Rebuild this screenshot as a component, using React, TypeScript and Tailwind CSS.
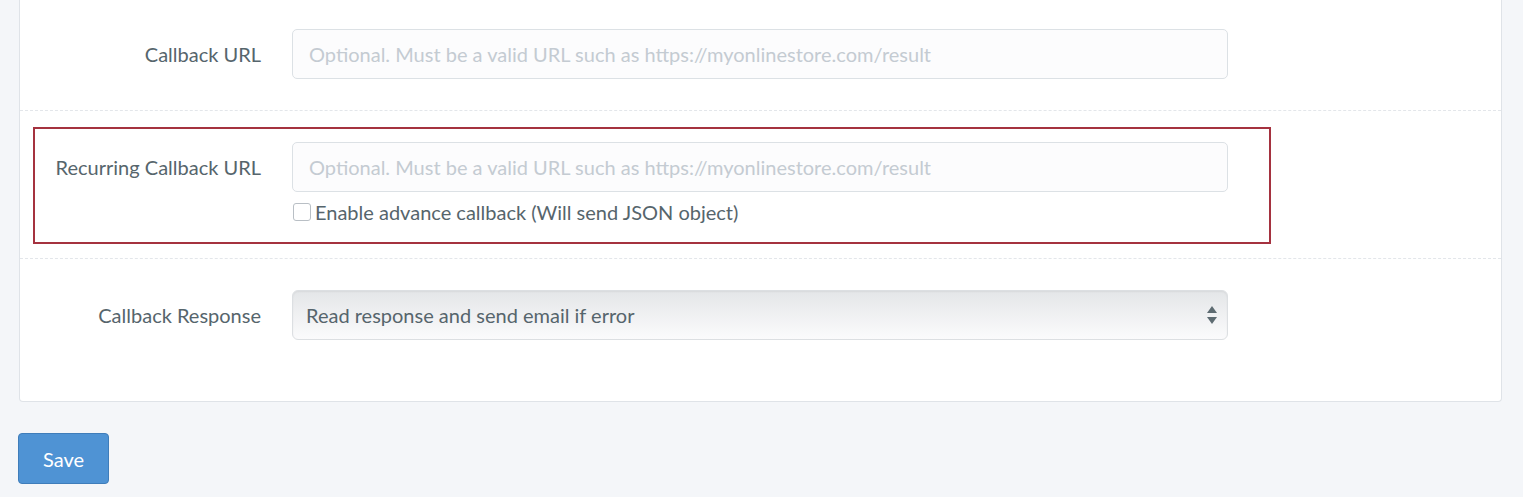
import React from "react";

const font = { fontFamily: "Lato, 'Open Sans', sans-serif" };

const PLACEHOLDER =
  "Optional. Must be a valid URL such as https://myonlinestore.com/result";

function TextInput() {
  return (
    <input
      type="text"
      placeholder={PLACEHOLDER}
      className="h-[50px] w-[936px] rounded-[5px] border border-[#dce1e5] bg-[#fcfcfd] px-[16px] text-[20px] text-[#56656c] outline-none placeholder:text-[#c4cbd2]"
    />
  );
}

export default function App() {
  return (
    <div
      className="min-h-screen w-full bg-[#f4f6f9] text-[#56656c]"
      style={font}
    >
      {/* panel */}
      <div className="ml-[19px] mr-[21px] rounded-b-[4px] border border-t-0 border-[#dfe3e8] bg-white">
        {/* Callback URL */}
        <div className="flex items-center border-b border-dashed border-[#e3e6ea] pt-[29px] pb-[31px]">
          <label className="w-[241px] text-right text-[20px]">Callback URL</label>
          <div className="ml-[31px]">
            <TextInput />
          </div>
        </div>

        {/* Recurring Callback URL */}
        <div className="border-b border-dashed border-[#e3e6ea] pt-[16px] pb-[14px]">
          <div className="mx-[13px] w-[1238px] border-2 border-[#a5323f] pt-[13px] pb-[18px]">
            <div className="flex items-center">
              <label className="w-[226px] text-right text-[20px]">
                Recurring Callback URL
              </label>
              <div className="ml-[31px]">
                <TextInput />
              </div>
            </div>
            <div className="ml-[258px] mt-[8px] flex items-center leading-[24px]">
              <span className="h-[18px] w-[18px] rounded-[3px] border border-[#b9bfc5] bg-white" />
              <span className="ml-[4px] text-[20px]">
                Enable advance callback (Will send JSON object)
              </span>
            </div>
          </div>
        </div>

        {/* Callback Response */}
        <div className="flex items-center pt-[31px] pb-[61px]">
          <label className="w-[241px] text-right text-[20px]">
            Callback Response
          </label>
          <div className="ml-[31px] flex h-[50px] w-[936px] items-center justify-between rounded-[6px] border border-[#dcdfe2] bg-gradient-to-b from-[#e4e6e8] to-[#fbfbfc] pl-[13px] pr-[8px] shadow-[inset_0_1px_2px_rgba(0,0,0,0.06)]">
            <span className="text-[20px] text-[#56656c]">
              Read response and send email if error
            </span>
            <svg width="12" height="22" viewBox="0 0 12 22" className="mr-[1px]">
              <path d="M6 2 L11 9 L1 9 Z" fill="#5d6b71" />
              <path d="M6 20 L11 13 L1 13 Z" fill="#5d6b71" />
            </svg>
          </div>
        </div>
      </div>

      {/* save */}
      <div className="ml-[18px] mt-[31px]">
        <button className="h-[51px] w-[91px] rounded-[4px] border border-[#3f7dba] bg-[#4f93d4] text-[20px] text-white">
          Save
        </button>
      </div>
    </div>
  );
}
